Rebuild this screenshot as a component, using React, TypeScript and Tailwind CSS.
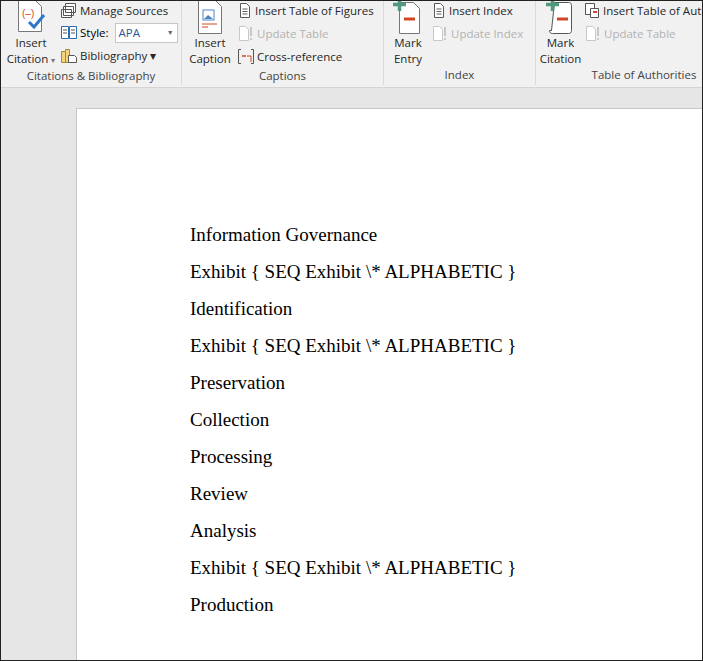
import React from "react";

const Doc = ({ c = "#5b5b5b" }: { c?: string }) => (
  <svg width="14" height="15" viewBox="0 0 14 15"><path d="M2.5 .5h6l3 3v11h-9z" fill="#fff" stroke={c} /><path d="M4.5 6h5M4.5 8.5h5M4.5 11h5" stroke={c} /></svg>
);
const DocBang = () => (
  <svg width="16" height="15" viewBox="0 0 16 15"><path d="M1.5 .5h6l3 3v11h-9z" fill="#fff" stroke="#c8c8c8" /><path d="M13 1v9M13 12v2" stroke="#c8c8c8" strokeWidth="2" /></svg>
);

const Small = ({ icon, label, dis }: { icon: React.ReactNode; label: string; dis?: boolean }) => (
  <div className={`flex items-center gap-[3px] h-[23px] ${dis ? "text-[#b1b1b1]" : "text-[#262626]"}`}>
    {icon}<span>{label}</span>
  </div>
);

const Plus = () => (
  <svg className="absolute -left-[2px] -top-[2px]" width="13" height="13" viewBox="0 0 13 13"><path d="M6.5 0v13M0 6.5h13" stroke="#4e9a7c" strokeWidth="3.5" /></svg>
);

export default function App() {
  const lines = ["Information Governance", "Exhibit { SEQ Exhibit \\* ALPHABETIC }", "Identification", "Exhibit { SEQ Exhibit \\* ALPHABETIC }", "Preservation", "Collection", "Processing", "Review", "Analysis", "Exhibit { SEQ Exhibit \\* ALPHABETIC }", "Production"];
  return (
    <div className="w-[703px] h-[661px] border border-[#222] flex flex-col overflow-hidden bg-[#e6e6e6]" style={{ fontFamily: '"Segoe UI","Open Sans","Noto Sans",sans-serif' }}>
      <div className="h-[87px] bg-[#f1f1f1] border-b border-[#d4d4d4] flex text-[11.5px] leading-[16px] shrink-0">
        {/* Citations */}
        <div className="w-[181px] border-r border-[#dadada] mb-[2px] flex flex-col">
          <div className="flex flex-1 -mt-[2px]">
            <div className="w-[60px] flex flex-col items-center text-[#262626]">
              <svg width="32" height="34" viewBox="0 0 32 34" className="mt-[1px]"><path d="M3.5 .5h17l6 6v25h-23z" fill="#fff" stroke="#777" /><text x="7" y="17" fontSize="10" fill="#d24726" fontFamily="Liberation Sans">(–)</text><path d="M14 22l5 5 10-12" stroke="#2b79c7" strokeWidth="3" fill="none" /></svg>
              <div className="text-center mt-[1px]">Insert<br />Citation <span className="text-[8px] text-[#777]">▾</span></div>
            </div>
            <div className="flex flex-col">
              <Small icon={<svg width="16" height="15" viewBox="0 0 16 15"><path d="M4.5 .5h10v9h-10zM2.5 3.5h10v9h-10zM.5 6.5h10v8h-10z" fill="#fff" stroke="#555" /></svg>} label="Manage Sources" />
              <div className="flex items-center gap-[3px] h-[23px] -mt-[1px]">
                <svg width="16" height="15" viewBox="0 0 16 15"><path d="M.5 1.5h7v12h-7zM8.5 1.5h7v12h-7z" fill="#fff" stroke="#2b6cb0" /><path d="M2 5h4M2 8h4M10 5h4M10 8h4" stroke="#555" /></svg>
                <span>Style:</span>
                <div className="ml-[3px] w-[63px] h-[20px] border border-[#c6c6c6] bg-white flex items-center justify-between px-[3px] text-[#2b579a]"><span>APA</span><span className="text-[7px] text-[#666]">▼</span></div>
              </div>
              <Small icon={<svg width="16" height="15" viewBox="0 0 16 15"><path d="M.5 3.5h4v11h-4zM4.5 1.5h4v13h-4z" fill="#f3d27a" stroke="#a68a3d" /><path d="M7.5 7.5h6l2 2v5h-8z" fill="#fff" stroke="#555" /></svg>} label="Bibliography ▾" />
            </div>
          </div>
          <div className="text-center text-[#444] h-[16px] mb-[4px]">Citations &amp; Bibliography</div>
        </div>
        {/* Captions */}
        <div className="w-[202px] border-r border-[#dadada] mb-[2px] flex flex-col">
          <div className="flex flex-1 -mt-[2px]">
            <div className="w-[56px] flex flex-col items-center text-[#262626]">
              <svg width="24" height="34" viewBox="0 0 24 34" className="mt-[1px]"><path d="M.5 .5h17l6 6v27h-23z" fill="#fff" stroke="#777" /><rect x="5" y="10" width="11" height="10" fill="#fff" stroke="#4a86c5" /><path d="M6 19l4-4 5 4" fill="#4a86c5" /><path d="M4 24h15M4 27h6" stroke="#d24726" /></svg>
              <div className="text-center mt-[1px]">Insert<br />Caption</div>
            </div>
            <div className="flex flex-col">
              <Small icon={<Doc />} label="Insert Table of Figures" />
              <Small dis icon={<DocBang />} label="Update Table" />
              <Small icon={<svg width="16" height="15" viewBox="0 0 16 15"><path d="M3 .5H.5v14H3M13 .5h2.5v14H13" fill="none" stroke="#555" /><path d="M4 7h4" stroke="#d24726" strokeWidth="1.5" /><path d="M9 7h4v6" fill="none" stroke="#d24726" /></svg>} label="Cross-reference" />
            </div>
          </div>
          <div className="text-center text-[#444] h-[16px] mb-[4px]">Captions</div>
        </div>
        {/* Index */}
        <div className="w-[152px] border-r border-[#dadada] mb-[2px] flex flex-col">
          <div className="flex flex-1 -mt-[2px]">
            <div className="w-[48px] flex flex-col items-center text-[#262626]">
              <div className="relative mt-[1px]"><svg width="26" height="34" viewBox="0 0 26 34"><path d="M4.5 2.5h14l6 6v25h-20z" fill="#fff" stroke="#777" /><path d="M9 19h11" stroke="#d24726" strokeWidth="3" /></svg><Plus /></div>
              <div className="text-center mt-[1px]">Mark<br />Entry</div>
            </div>
            <div className="flex flex-col">
              <Small icon={<Doc />} label="Insert Index" />
              <Small dis icon={<DocBang />} label="Update Index" />
            </div>
          </div>
          <div className="text-center text-[#444] h-[16px] mb-[4px]">Index</div>
        </div>
        {/* Authorities */}
        <div className="flex-1 mb-[2px] flex flex-col overflow-hidden">
          <div className="flex flex-1 -mt-[2px]">
            <div className="w-[49px] shrink-0 flex flex-col items-center text-[#262626]">
              <div className="relative mt-[1px]"><svg width="26" height="34" viewBox="0 0 26 34"><path d="M6.5 2.5h14c2 0 3 1 3 3v25c0 2-1 3-3 3h-16c-2 0-3-1-3-3h2z" fill="#fff" stroke="#555" /><path d="M9 19h11" stroke="#d24726" strokeWidth="3" /></svg><Plus /></div>
              <div className="text-center mt-[1px]">Mark<br />Citation</div>
            </div>
            <div className="flex flex-col whitespace-nowrap">
              <Small icon={<svg width="15" height="15" viewBox="0 0 15 15"><path d="M.5 .5h9v11h-9z" fill="#fff" stroke="#555" /><path d="M5.5 5.5h8v9h-8z" fill="#fff" stroke="#555" /><path d="M8 9h4" stroke="#d24726" strokeWidth="2" /></svg>} label="Insert Table of Authorities" />
              <Small dis icon={<DocBang />} label="Update Table" />
            </div>
          </div>
          <div className="text-center text-[#444] h-[16px] mb-[4px] pl-[50px] whitespace-nowrap">Table of Authorities</div>
        </div>
      </div>
      <div className="flex-1 pt-[20px] pl-[75px]">
        <div className="h-full bg-white border-l border-t border-[#c6c6c6] pl-[113px] pt-[114px] text-[19px] text-black" style={{ fontFamily: '"Liberation Serif","Times New Roman",serif' }}>
          {lines.map((l, i) => (
            <div key={i} className="h-[37px] leading-[24px]">{l}</div>
          ))}
        </div>
      </div>
    </div>
  );
}
